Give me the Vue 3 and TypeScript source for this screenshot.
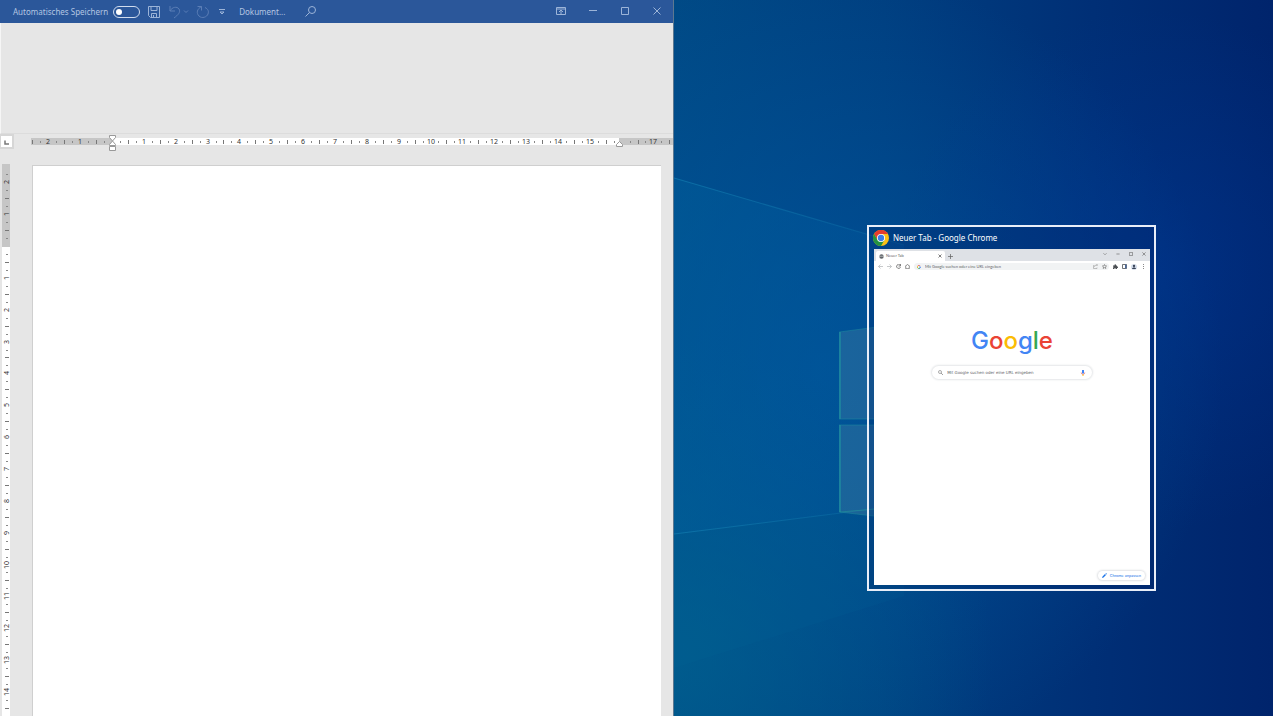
<script setup lang="ts">
import { ref } from 'vue'

interface Mark {
  pos: number
  kind: 'number' | 'tick' | 'dot'
  label: string
}

const PX_PER_CM = 31.85

function buildMarks(origin: number, fromQuarter: number, toQuarter: number, hidden: number[]): Mark[] {
  const marks: Mark[] = []
  for (let q = fromQuarter; q <= toQuarter; q++) {
    const cm = q / 4
    if (q === 0 || hidden.includes(cm)) continue
    const pos = Math.round(origin + cm * PX_PER_CM)
    if (q % 4 === 0) marks.push({ pos, kind: 'number', label: String(Math.abs(cm)) })
    else marks.push({ pos, kind: q % 2 === 0 ? 'tick' : 'dot', label: '' })
  }
  return marks
}

const horizontal = buildMarks(81, -10, 70, [16])
const vertical = buildMarks(82, -9, 59, [])

const autoSave = ref(false)
const documentText = ref('')
const address = ref('')
const query = ref('')
</script>

<template>
  <main class="desktop">
    <section class="word" aria-label="Word">
      <header class="titlebar">
        <label class="autosave">
          <span>Automatisches Speichern</span>
          <input v-model="autoSave" type="checkbox" role="switch" class="toggle" />
        </label>
        <button class="icon save" aria-label="Speichern">
          <svg width="12" height="12" viewBox="0 0 12 12"><path d="M.5.5h11v11h-9l-2-2zM3 .5v4h6v-4M3.500 11.500v-4h5v4M5.500 9v2" /></svg>
        </button>
        <button class="icon dim undo" aria-label="Rückgängig">
          <svg width="12" height="14" viewBox="0 0 12 14"><path d="M1 1v5h5M1 6C3 2 8 1 10 4s-1 6-5 9" /></svg>
          <svg width="6" height="4" viewBox="0 0 6 4"><path d="M1 .5l2 2 2-2" /></svg>
        </button>
        <button class="icon dim redo" aria-label="Wiederholen">
          <svg width="13" height="14" viewBox="0 0 13 14"><path d="M1.500 1.500h4v4M5.500 1.500C1 4 0 8 3 11s8 1 9-2 0-5-3-6.500" /></svg>
        </button>
        <button class="icon customize" aria-label="Symbolleiste anpassen">
          <svg width="6" height="6" viewBox="0 0 6 6"><path d="M0 .5h6M1 3l2 2 2-2z" /></svg>
        </button>
        <span class="docname">Dokument...</span>
        <button class="icon" aria-label="Suchen">
          <svg width="11" height="11" viewBox="0 0 11 11"><circle cx="7" cy="4" r="3.500" /><path d="M4.500 6.500L.5 10.500" /></svg>
        </button>
        <div class="window-controls">
          <button class="icon" aria-label="Menüband-Anzeigeoptionen">
            <svg width="10" height="8" viewBox="0 0 10 8"><path d="M.5.5h9v7h-9zM.5 2h9M5 7V3M3 5l2-2 2 2" /></svg>
          </button>
          <button class="icon" aria-label="Minimieren">
            <svg width="8" height="8" viewBox="0 0 8 8"><path d="M0 3.500h8" /></svg>
          </button>
          <button class="icon" aria-label="Maximieren">
            <svg width="8" height="8" viewBox="0 0 8 8"><path d="M.5.5h7v7h-7z" /></svg>
          </button>
          <button class="icon" aria-label="Schließen">
            <svg width="8" height="8" viewBox="0 0 8 8"><path d="M.5.5l7 7M7.500.5l-7 7" /></svg>
          </button>
        </div>
      </header>

      <div class="ribbon"></div>

      <div class="ruler-row">
        <button class="tab-stop" aria-label="Tabstopp">
          <svg width="11" height="11" viewBox="0 0 11 11"><path fill="#fff" d="M0 0h11v11H0z" /><path fill="none" stroke="#777" stroke-width="1.500" d="M4 4.500v3.500h4" /></svg>
        </button>
        <svg class="ruler-h" height="30" aria-hidden="true">
          <rect y="4" width="100%" height="7" fill="#c6c6c6" />
          <rect x="81" y="4" width="507" height="7" fill="#fff" />
          <template v-for="m in horizontal" :key="m.pos">
            <text v-if="m.kind === 'number'" :x="m.pos" y="10" text-anchor="middle">{{ m.label }}</text>
            <rect v-else-if="m.kind === 'tick'" :x="m.pos" y="6" width="1" height="4" fill="#777" />
            <rect v-else :x="m.pos" y="7" width="1" height="2" fill="#888" />
          </template>
          <g fill="#fff" stroke="#999">
            <path d="M78.500 1.500h6v2l-3 3.500-3-3.500z" />
            <path d="M81.500 7l3 3.500v1h-6v-1z" />
            <path d="M78.500 12.500h6v4h-6z" />
            <path d="M588.500 7.500l3 3v2h-6v-2z" />
          </g>
        </svg>
      </div>

      <div class="workspace">
        <svg class="ruler-v" width="8" aria-hidden="true">
          <rect width="8" height="100%" fill="#fff" />
          <rect width="8" height="83" fill="#c6c6c6" />
          <template v-for="m in vertical" :key="m.pos">
            <text v-if="m.kind === 'number'" x="7" :y="m.pos" text-anchor="middle" :transform="`rotate(-90 7 ${m.pos})`">{{ m.label }}</text>
            <rect v-else-if="m.kind === 'tick'" x="3" :y="m.pos" width="4" height="1" fill="#777" />
            <rect v-else x="4" :y="m.pos" width="2" height="1" fill="#888" />
          </template>
        </svg>
        <textarea v-model="documentText" class="page" aria-label="Dokument"></textarea>
      </div>
    </section>

    <section class="snap" aria-label="Fensterauswahl">
      <svg class="wallpaper" viewBox="0 0 599 716" preserveAspectRatio="none" aria-hidden="true">
        <defs>
          <linearGradient id="base" x1="0" x2="1" y1="0" y2="0">
            <stop offset="0" stop-color="#004a86" />
            <stop offset=".35" stop-color="#003f80" />
            <stop offset=".7" stop-color="#002f76" />
            <stop offset="1" stop-color="#00246c" />
          </linearGradient>
          <linearGradient id="beam" x1="0" x2="1" y1="0" y2="0">
            <stop offset="0" stop-color="#00609c" />
            <stop offset="1" stop-color="#00549a" />
          </linearGradient>
          <radialGradient id="glow" gradientUnits="userSpaceOnUse" cx="150" cy="370" r="400">
            <stop offset="0" stop-color="#0058a0" stop-opacity=".7" />
            <stop offset="1" stop-color="#0058a0" stop-opacity="0" />
          </radialGradient>
          <radialGradient id="blue" gradientUnits="userSpaceOnUse" cx="480" cy="270" r="260">
            <stop offset="0" stop-color="#003898" stop-opacity=".45" />
            <stop offset="1" stop-color="#003898" stop-opacity="0" />
          </radialGradient>
          <radialGradient id="teal" gradientUnits="userSpaceOnUse" cx="0" cy="660" r="320">
            <stop offset="0" stop-color="#006490" stop-opacity=".65" />
            <stop offset="1" stop-color="#006490" stop-opacity="0" />
          </radialGradient>
          <linearGradient id="ray" x1="0" x2="1" y1="0" y2="0">
            <stop offset="0" stop-color="#1482b4" stop-opacity=".6" />
            <stop offset="1" stop-color="#1482b4" stop-opacity=".2" />
          </linearGradient>
        </defs>
        <path fill="url(#base)" d="M0 0h599v716H0z" />
        <path fill="url(#glow)" d="M0 0h599v716H0z" />
        <path fill="url(#blue)" d="M0 0h599v716H0z" />
        <path fill="url(#teal)" d="M0 0h599v716H0z" />
        <path fill="url(#beam)" fill-opacity=".4" d="M0 178L230 245V505L0 534z" />
        <path fill="#006aa0" fill-opacity=".12" d="M0 534L230 505V596L0 668z" />
        <path fill="none" stroke="url(#ray)" d="M0 178L230 245M0 534L230 505" />
        <path fill="#5088a8" fill-opacity=".32" stroke="#1e8ca0" stroke-opacity=".5" d="M165.500 332L225 324V419H165.500zM165.500 425H225V519L165.500 512z" />
        <path fill="none" stroke="#208ca0" stroke-width="2" stroke-opacity=".7" d="M166 332V419M166 425V512" />
        <path fill="none" stroke="#249c98" stroke-opacity=".5" d="M166 512L225 507" />
      </svg>

      <article class="preview">
        <h2 class="preview-title">
          <svg width="16" height="16" viewBox="0 0 48 48" aria-hidden="true">
            <circle cx="24" cy="24" r="24" fill="#fbc116" />
            <path fill="#e33b2e" d="M3.200 12A24 24 0 0 1 44.800 12H24L13.600 30z" />
            <path fill="#229342" d="M3.200 12A24 24 0 0 0 24 48L34.400 30 24 36 13.600 30z" />
            <circle cx="24" cy="24" r="12" fill="#fff" />
            <circle cx="24" cy="24" r="9.500" fill="#3b7de8" />
          </svg>
          <span>Neuer Tab - Google Chrome</span>
        </h2>

        <div class="browser">
          <div class="tabstrip">
            <div class="tab">
              <svg width="5" height="5" viewBox="0 0 10 10"><circle cx="5" cy="5" r="4.500" fill="#5f6368" /><path d="M0 4.500h10" stroke="#fff" /></svg>
              <span>Neuer Tab</span>
              <button aria-label="Tab schließen"><svg width="4" height="4" viewBox="0 0 8 8"><path d="M1 1l6 6M7 1L1 7" stroke="#555" stroke-width="1.500" /></svg></button>
            </div>
            <button class="new-tab" aria-label="Neuer Tab"><svg width="5" height="5" viewBox="0 0 10 10"><path d="M5 0v10M0 5h10" stroke="#666" stroke-width="1.500" /></svg></button>
            <div class="browser-controls">
              <button aria-label="Tabs suchen"><svg width="4" height="4" viewBox="0 0 10 10"><path d="M1 3l4 4 4-4" fill="none" stroke="#777" stroke-width="1.600" /></svg></button>
              <button aria-label="Minimieren"><svg width="4" height="4" viewBox="0 0 10 10"><path d="M1 5h8" stroke="#666" stroke-width="1.600" /></svg></button>
              <button aria-label="Maximieren"><svg width="4" height="4" viewBox="0 0 10 10"><path d="M1 1h8v8H1z" fill="none" stroke="#666" stroke-width="1.600" /></svg></button>
              <button aria-label="Schließen"><svg width="4" height="4" viewBox="0 0 10 10"><path d="M1 1l8 8M9 1L1 9" stroke="#666" stroke-width="1.600" /></svg></button>
            </div>
          </div>

          <div class="toolbar">
            <button aria-label="Zurück"><svg width="5" height="5" viewBox="0 0 10 10"><path d="M10 5H1M5 1L1 5l4 4" fill="none" stroke="#b4b7ba" stroke-width="1.500" /></svg></button>
            <button aria-label="Vorwärts"><svg width="5" height="5" viewBox="0 0 10 10"><path d="M0 5h9M5 1l4 4-4 4" fill="none" stroke="#b4b7ba" stroke-width="1.500" /></svg></button>
            <button aria-label="Neu laden"><svg width="5" height="5" viewBox="0 0 10 10"><path d="M9 6A4 4 0 1 1 8 2M9 0v4H5" fill="none" stroke="#666" stroke-width="1.600" /></svg></button>
            <button aria-label="Startseite"><svg width="5" height="5" viewBox="0 0 10 10"><path d="M0 5l5-4 5 4M1.500 5v4.500h7V5" fill="none" stroke="#666" stroke-width="1.500" /></svg></button>
            <div class="omnibox">
              <svg width="4" height="4" viewBox="0 0 10 10" fill="none" stroke-width="2"><path d="M1.500 3A4 4 0 0 1 8 2" stroke="#ea4335" /><path d="M1.500 3a4 4 0 0 0 0 4" stroke="#fbbc04" /><path d="M1.500 7A4 4 0 0 0 7.500 8" stroke="#34a853" /><path d="M7.500 8A4 4 0 0 0 9 5H5" stroke="#4285f4" /></svg>
              <input v-model="address" aria-label="Adresse" placeholder="Mit Google suchen oder eine URL eingeben" />
              <button aria-label="Teilen"><svg width="5" height="5" viewBox="0 0 10 10"><path d="M3 3H1v6h7V7M3 6c0-3 2-4 6-4M7 0l2 2-2 2" fill="none" stroke="#888" /></svg></button>
              <button aria-label="Lesezeichen"><svg width="5" height="5" viewBox="0 0 10 10"><path d="M5 1l1.200 2.800 3 .2-2.300 2L7.700 9 5 7.300 2.300 9l.8-3L.8 4l3-.2z" fill="none" stroke="#666" stroke-width="1.200" /></svg></button>
            </div>
            <button aria-label="Erweiterungen"><svg width="5" height="5" viewBox="0 0 10 10"><path d="M0 3h3V2a1.500 1.500 0 0 1 3 0v1h2v2h1a1.500 1.500 0 0 1 0 3H8v2H5V8H3v2H0V7h1V5H0z" fill="#4c5054" /></svg></button>
            <button aria-label="Seitenleiste"><svg width="5" height="5" viewBox="0 0 10 10"><path d="M1 1h8v8H1z" fill="none" stroke="#4c5054" stroke-width="1.600" /><path d="M6 1h3v8H6z" fill="#4c6a9a" /></svg></button>
            <button aria-label="Profil"><svg width="6" height="6" viewBox="0 0 12 12"><circle cx="6" cy="6" r="6" fill="#d3dcea" /><circle cx="6" cy="4" r="2.300" fill="#394457" /><path d="M2 10c0-4 8-4 8 0z" fill="#394457" /></svg></button>
            <button aria-label="Menü"><svg width="5" height="5" viewBox="0 0 10 10" fill="#666"><circle cx="5" cy="1" r="1" /><circle cx="5" cy="5" r="1" /><circle cx="5" cy="9" r="1" /></svg></button>
          </div>

          <div class="content">
            <div class="logo" aria-label="Google"><span class="b">G</span><span class="r">o</span><span class="y">o</span><span class="b">g</span><span class="g">l</span><span class="r">e</span></div>
            <div class="searchbox">
              <svg width="5" height="5" viewBox="0 0 10 10"><circle cx="4" cy="4" r="3" fill="none" stroke="#888" stroke-width="1.400" /><path d="M6 6l4 4" stroke="#888" stroke-width="1.600" /></svg>
              <input v-model="query" aria-label="Suche" placeholder="Mit Google suchen oder eine URL eingeben" />
              <button aria-label="Sprachsuche"><svg width="6" height="6" viewBox="0 0 12 12"><path d="M4 0h4v7H4z" fill="#4285f4" /><path d="M2.500 5c0 5 7 5 7 0" fill="none" stroke="#ea4335" stroke-width="1.200" /><path d="M6 9v3" stroke="#fbbc04" stroke-width="2" /></svg></button>
            </div>
            <button class="customize-chrome">
              <svg width="5" height="5" viewBox="0 0 10 10"><path d="M0 10l1-3 5-5 2 2-5 5zM7 1l1-1 2 2-1 1z" fill="#1a73e8" /></svg>
              <span>Chrome anpassen</span>
            </button>
          </div>
        </div>
      </article>
    </section>
  </main>
</template>

<style>
html,
body {
  margin: 0;
  overflow: hidden;
}
</style>

<style scoped>
.desktop {
  display: grid;
  grid-template-columns: minmax(0, 9fr) minmax(0, 8fr);
  height: 100vh;
  overflow: hidden;
  font-family: "Noto Sans", "Open Sans", sans-serif;
}
button {
  display: inline-flex;
  align-items: center;
  justify-content: center;
  padding: 0;
  border: 0;
  background: none;
  font: inherit;
}
svg {
  display: block;
  flex: none;
}
input {
  min-width: 0;
  padding: 0;
  border: 0;
  outline: 0;
  background: none;
  font: inherit;
}
input::placeholder {
  color: #5f6368;
  opacity: 1;
}

.word {
  display: flex;
  flex-direction: column;
  min-height: 0;
  border-right: 1px solid #5d7890;
  background: #e6e6e6;
}
.titlebar {
  display: flex;
  align-items: center;
  height: 23px;
  padding-left: 13px;
  background: #2b579a;
  color: #b4c6e2;
  font-size: 8px;
  line-height: 12px;
}
.autosave {
  display: flex;
  align-items: center;
  gap: 5px;
}
.toggle {
  display: flex;
  align-items: center;
  box-sizing: border-box;
  width: 27px;
  height: 12px;
  margin: 0;
  padding: 0 2px;
  appearance: none;
  border: 1px solid #d0dcee;
  border-radius: 6px;
}
.toggle::before {
  width: 6px;
  height: 6px;
  border-radius: 50%;
  background: #fff;
  content: "";
}
.toggle:checked {
  justify-content: flex-end;
}
.icon svg {
  fill: none;
  stroke: #9cb4d8;
}
.icon.dim svg {
  stroke: #5b7eb6;
}
.save {
  margin-left: 8px;
}
.undo {
  gap: 2px;
  margin-left: 9px;
}
.redo {
  margin-left: 7px;
}
.customize {
  margin: 0 14px 0 10px;
}
.docname {
  margin-right: 20px;
}
.window-controls {
  display: grid;
  grid-template-columns: repeat(4, 32px);
  align-self: flex-start;
  height: 22px;
  margin-left: auto;
}

.ribbon {
  box-sizing: border-box;
  height: 111px;
  border-bottom: 1px solid #dcdcdc;
  border-left: 1px solid #f6f6f6;
}
.ruler-row {
  display: flex;
  align-items: flex-start;
  gap: 17px;
  height: 30px;
}
.tab-stop {
  justify-content: flex-start;
  width: 14px;
  height: 15px;
  padding-left: 1px;
  background: #d6d6d6;
}
.ruler-h {
  flex: 1;
  min-width: 0;
}
.ruler-h text,
.ruler-v text {
  fill: #333;
  font-size: 7px;
}
.workspace {
  display: flex;
  flex: 1;
  gap: 22px;
  min-height: 0;
  padding: 0 12px 0 2px;
}
.ruler-v {
  height: 100%;
}
.page {
  box-sizing: border-box;
  flex: 1;
  min-width: 0;
  margin: 1px 0 0;
  padding: 64px 80px;
  resize: none;
  border: 1px solid #cfcfcf;
  border-width: 1px 0 0 1px;
  border-radius: 0;
  outline: 0;
  background: #fff;
}

.snap {
  position: relative;
  padding: 225px 117px 0 193px;
  overflow: hidden;
}
.wallpaper {
  position: absolute;
  inset: 0;
  width: 100%;
  height: 100%;
}
.preview {
  position: relative;
  padding: 0 4px 4px;
  border: 2px solid #e8eef8;
  background: rgb(0 32 100 / 25%);
}
.preview-title {
  display: flex;
  align-items: center;
  gap: 4px;
  height: 22px;
  margin: 0;
  color: #fff;
  font-size: 8px;
  font-weight: 400;
  line-height: 12px;
}
.browser {
  display: flex;
  flex-direction: column;
  aspect-ratio: 275 / 335;
  margin: 0 0 0 1px;
  background: #fff;
  color: #5f6368;
  font-family: Lato, sans-serif;
  font-size: 4px;
  line-height: 6px;
}
.tabstrip {
  display: flex;
  height: 12px;
  padding-left: 2px;
  background: #dee1e6;
}
.tab {
  display: flex;
  align-items: center;
  gap: 2px;
  box-sizing: border-box;
  width: 69px;
  height: 10px;
  margin-top: 2px;
  padding: 0 3px;
  border-radius: 2px 2px 0 0;
  background: #fff;
}
.tab button {
  margin-left: auto;
}
.new-tab {
  width: 12px;
  height: 14px;
}
.browser-controls {
  display: grid;
  grid-template-columns: repeat(4, 13px);
  height: 9px;
  margin-left: auto;
}
.toolbar {
  display: flex;
  align-items: center;
  gap: 4px;
  height: 11px;
  padding: 0 4px;
}
.omnibox {
  display: flex;
  flex: 1;
  align-items: center;
  gap: 4px;
  height: 7px;
  padding: 0 2px 0 3px;
  border-radius: 4px;
  background: #f1f3f4;
}
.omnibox input,
.searchbox input {
  flex: 1;
}
.omnibox input {
  height: 6px;
}
.content {
  display: flex;
  flex: 1;
  flex-direction: column;
  align-items: center;
  padding: 52px 5px 5px;
}
.logo {
  font-family: Inter, sans-serif;
  font-size: 24px;
  font-weight: 500;
  line-height: 34px;
}
.b { color: #4285f4; }
.r { color: #ea4335; }
.y { color: #fbbc05; }
.g { color: #34a853; }
.searchbox {
  display: flex;
  align-items: center;
  gap: 4px;
  box-sizing: border-box;
  width: 60%;
  height: 13px;
  margin-top: 8px;
  padding: 0 6px;
  border-radius: 7px;
  box-shadow: 0 0 2px 1px #e4e6e8;
  font-family: "DejaVu Sans", sans-serif;
}
.customize-chrome {
  gap: 3px;
  height: 9px;
  margin-top: auto;
  margin-left: auto;
  padding: 0 4px;
  border-radius: 5px;
  box-shadow: 0 0 2px 1px #e0e2e5;
  color: #1a73e8;
}
</style>
